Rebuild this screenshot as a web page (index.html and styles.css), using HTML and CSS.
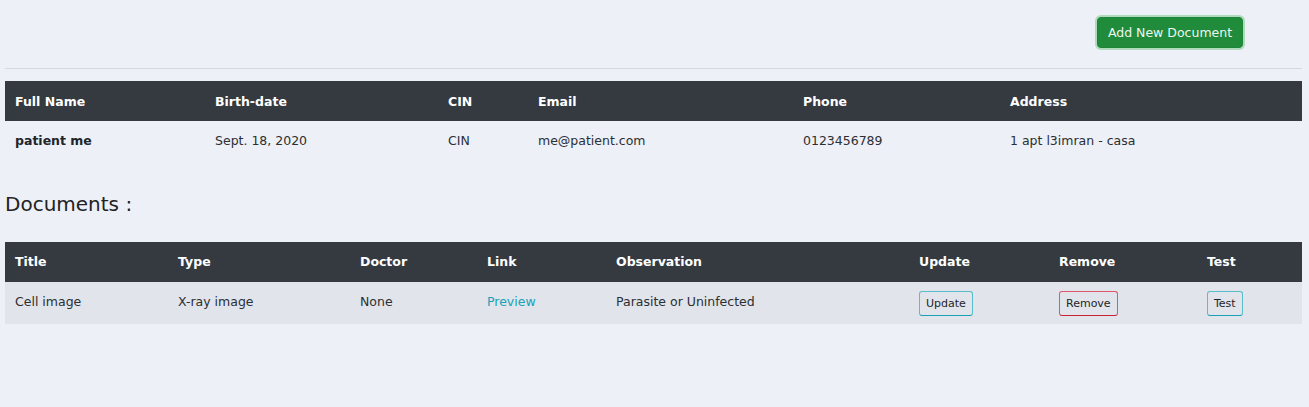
FILE: index.html
```html
<!DOCTYPE html>
<html lang="en">
<head>
<meta charset="utf-8">
<title>Patient</title>
<link rel="stylesheet" href="styles.css">
</head>
<body>
<div class="page">
  <div class="topbar">
    <button class="btn-add">Add New Document</button>
  </div>
  <hr class="rule">
  <table class="tbl info">
    <colgroup>
      <col class="c1"><col class="c2"><col class="c3"><col class="c4"><col class="c5"><col class="c6">
    </colgroup>
    <thead>
      <tr><th>Full Name</th><th>Birth-date</th><th>CIN</th><th>Email</th><th>Phone</th><th>Address</th></tr>
    </thead>
    <tbody>
      <tr><td class="strong">patient me</td><td>Sept. 18, 2020</td><td>CIN</td><td>me@patient.com</td><td>0123456789</td><td>1 apt l3imran - casa</td></tr>
    </tbody>
  </table>
  <h4 class="section-title">Documents :</h4>
  <table class="tbl docs">
    <colgroup>
      <col class="d1"><col class="d2"><col class="d3"><col class="d4"><col class="d5"><col class="d6"><col class="d7"><col class="d8">
    </colgroup>
    <thead>
      <tr><th>Title</th><th>Type</th><th>Doctor</th><th>Link</th><th>Observation</th><th>Update</th><th>Remove</th><th>Test</th></tr>
    </thead>
    <tbody>
      <tr class="striped">
        <td>Cell image</td><td>X-ray image</td><td>None</td>
        <td><a class="link" href="#">Preview</a></td>
        <td>Parasite or Uninfected</td>
        <td class="act"><span class="btn-sm info-b">Update</span></td>
        <td class="act"><span class="btn-sm danger-b">Remove</span></td>
        <td class="act"><span class="btn-sm info-b">Test</span></td>
      </tr>
    </tbody>
  </table>
</div>
</body>
</html>
```
FILE: styles.css
```css
* { box-sizing: border-box; }
html, body { margin: 0; padding: 0; }
body {
  background: #edf0f6;
  font-family: "DejaVu Sans", sans-serif;
  color: #2b2f33;
  width: 1309px;
  height: 407px;
  overflow: hidden;
}
.page { padding: 0 7px 0 5px; }
.topbar {
  display: flex;
  justify-content: flex-end;
  padding: 17px 59px 0 0;
}
.btn-add {
  font-family: "DejaVu Sans", sans-serif;
  font-size: 12.5px;
  line-height: 18px;
  color: #eef6ef;
  background: #1f8b3b;
  border: 1px solid #1e8437;
  border-radius: 4px;
  padding: 6px 8px;
  width: 146px;
  height: 31px;
  white-space: nowrap;
  box-shadow: 0 0 0 2px rgba(100, 190, 120, 0.45);
}
.rule {
  border: 0;
  border-top: 1px solid #d5d8de;
  margin: 20px 0 12px;
}
.tbl {
  width: 100%;
  border-collapse: collapse;
  table-layout: fixed;
  font-size: 12.5px;
}
.tbl th, .tbl td {
  text-align: left;
  padding: 10px 10px;
  line-height: 19px;
  white-space: nowrap;
}
.tbl thead th {
  background: #343a40;
  color: #fff;
  font-weight: bold;
  padding-top: 11px;
  padding-bottom: 10px;
}
.docs thead th { padding-top: 10px; padding-bottom: 11px; }
.info td { padding-top: 10px; padding-bottom: 10px; }
.strong { font-weight: bold; color: #212529; }
.c1 { width: 200px; } .c2 { width: 233px; } .c3 { width: 90px; }
.c4 { width: 265px; } .c5 { width: 207px; } .c6 { width: 302px; }
.d1 { width: 163px; } .d2 { width: 182px; } .d3 { width: 127px; } .d4 { width: 129px; }
.d5 { width: 303px; } .d6 { width: 140px; } .d7 { width: 148px; } .d8 { width: 105px; }
.section-title {
  font-size: 20px;
  font-weight: normal;
  line-height: 24px;
  margin: 32px 0 26px;
  color: #222;
}
.docs td { padding-top: 10px; padding-bottom: 8px; vertical-align: top; }
.docs td.act { padding-top: 9px; padding-bottom: 8px; }
.striped td { background: #e1e4ea; }
.link { color: #17a2b8; text-decoration: none; }
.btn-sm {
  display: inline-block;
  font-family: "DejaVu Sans", sans-serif;
  font-size: 11px;
  line-height: 15px;
  color: #212529;
  background: transparent;
  border: 1px solid #17a2b8;
  border-radius: 3px;
  padding: 4px 6px;
  height: 25px;
  cursor: pointer;
}
.info-b { border-color: #5bbccb; border-bottom-color: #17a2b8; }
.danger-b { border-color: #e0566a; border-bottom-color: #c82333; }
```
